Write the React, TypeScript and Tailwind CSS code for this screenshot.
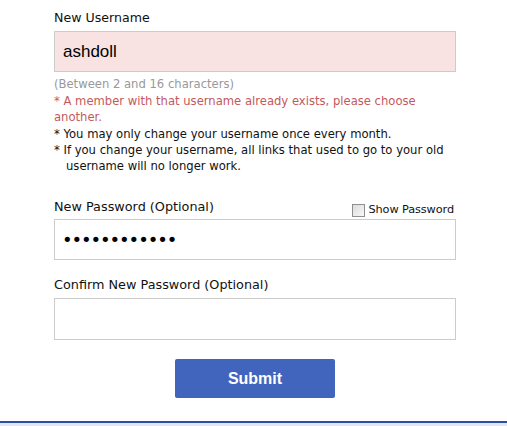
import { useState } from "react"

const font = { fontFamily: '"DejaVu Sans", Verdana, sans-serif' }

export default function App() {
  const [show, setShow] = useState(false)

  return (
    <div className="min-h-[426px] w-[507px] bg-white flex flex-col font-['DejaVu_Sans',Verdana,sans-serif] text-[#111]">
      <form className="w-[402px] ml-[54px] pt-[10px]" onSubmit={(e) => e.preventDefault()}>
        {/* Username */}
        <label className="block text-[12.6px] leading-[16px] mb-[5px]">New Username</label>
        <div className="h-[41px] border border-[#cccccc] bg-[#f9e2e2] flex items-center px-[8px]">
          <span className="font-['Liberation_Sans',Arial,sans-serif] text-[17px] text-black">ashdoll</span>
        </div>

        <div className="text-[11.6px] leading-[16px] mt-[4px]">
          <p className="text-[#999999]">(Between 2 and 16 characters)</p>
          <p className="text-[#c4585c] mt-[1px]">* A member with that username already exists, please choose another.</p>
          <ul className="mt-[1px] text-[#111]">
            <li className="pl-[12px] -indent-[12px]">* You may only change your username once every month.</li>
            <li className="pl-[12px] -indent-[12px]">* If you change your username, all links that used to go to your old username will no longer work.</li>
          </ul>
        </div>

        {/* New password */}
        <div className="flex items-end justify-between mt-[25px] mb-[4px]">
          <label className="text-[12.8px] leading-[16px]">New Password (Optional)</label>
          <label className="flex items-center gap-[3px] text-[11.3px] leading-[16px] mr-[2px] mb-[-3px] tracking-[-0.1px]" style={font}>
            <input
              type="checkbox"
              checked={show}
              onChange={() => setShow(!show)}
              className="appearance-none w-[13px] h-[13px] border border-[#8f8f8f] bg-gradient-to-br from-[#dcdcdc] to-[#f8f8f8] m-0"
            />
            Show Password
          </label>
        </div>
        <div className="h-[41px] border border-[#cccccc] bg-white flex items-center px-[7px]">
          <span className="text-[18px] tracking-[-1.1px] text-black leading-none">
            {show ? "password1234" : "••••••••••••"}
          </span>
        </div>

        {/* Confirm */}
        <label className="block text-[12.8px] leading-[16px] mt-[17px] mb-[5px]">Confirm New Password (Optional)</label>
        <div className="h-[42px] border border-[#cccccc] bg-white" />

        <div className="flex justify-center mt-[19px]">
          <button
            type="submit"
            className="w-[160px] h-[39px] rounded-[2px] bg-[#4165bd] text-white font-bold text-[16px] font-['Liberation_Sans',Arial,sans-serif]"
          >
            Submit
          </button>
        </div>
      </form>

      <div className="mt-[23px] border-t-2 border-[#2b4fa3] bg-[#e1e6f2] flex-1 min-h-[5px]" />
    </div>
  )
}
